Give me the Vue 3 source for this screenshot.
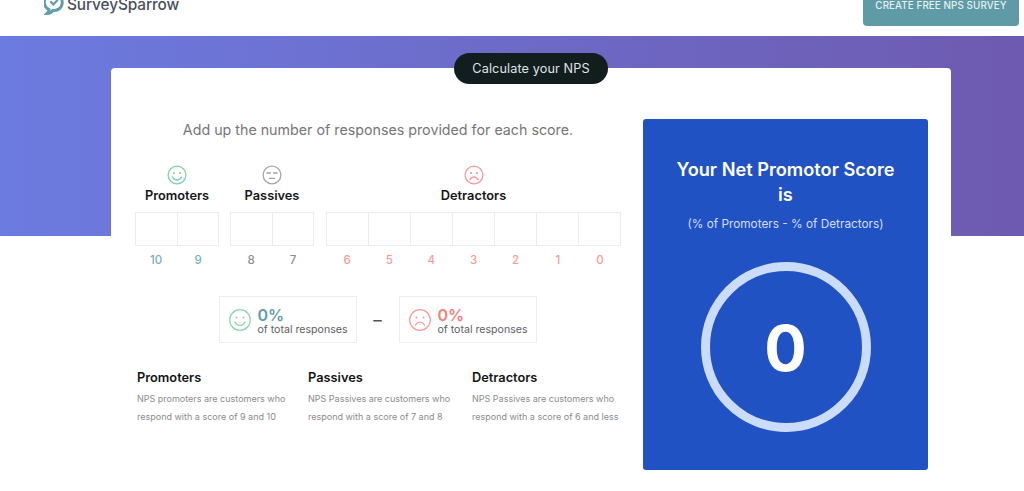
<script setup>
const promoters = [10, 9]
const passives = [8, 7]
const detractors = [6, 5, 4, 3, 2, 1, 0]
const info = [
  { title: 'Promoters', lines: ['NPS promoters are customers who', 'respond with a score of 9 and 10'], width: '171px' },
  { title: 'Passives', lines: ['NPS Passives are customers who', 'respond with a score of 7 and 8'], width: '164px' },
  { title: 'Detractors', lines: ['NPS Passives are customers who', 'respond with a score of 6 and less'], width: '150px' }
]
</script>

<template>
  <div class="page">
    <header class="top">
      <div class="logo">
        <svg class="logo-mark" viewBox="0 0 20 24" width="20" height="24">
          <path d="M10 1.5a8 8 0 1 1-1 15.900c-1.200 1.900-3.200 3-6 3.100 1.200-1.100 1.900-2.300 2-3.900A8 8 0 0 1 10 1.500z" fill="none" stroke="#5f9ea8" stroke-width="3"/>
          <path d="M6.400 8.400l3 3 4.400-4.600" fill="none" stroke="#5f9ea8" stroke-width="2.200"/>
        </svg>
        <span class="logo-text">SurveySparrow</span>
      </div>
      <div class="cta">CREATE FREE NPS SURVEY</div>
    </header>

    <section class="hero">
      <div class="card">
        <div class="pill">Calculate your NPS</div>
        <div class="left">
          <p class="lead">Add up the number of responses provided for each score.</p>

          <div class="scores">
            <div class="group">
              <svg class="face" viewBox="0 0 20 20" width="20" height="20">
                <circle cx="10" cy="10" r="8.900" fill="none" stroke="#7fd0ab" stroke-width="1.300"/>
                <circle cx="7" cy="8" r="1.100" fill="#7fd0ab"/><circle cx="13" cy="8" r="1.100" fill="#7fd0ab"/>
                <path d="M5.600 12c1 2.200 2.600 3 4.400 3s3.400-.8 4.400-3" fill="none" stroke="#7fd0ab" stroke-width="1.300" stroke-linecap="round"/>
              </svg>
              <div class="label">Promoters</div>
              <div class="boxes"><div v-for="n in promoters" :key="n" class="box"></div></div>
              <div class="nums teal"><span v-for="n in promoters" :key="n">{{ n }}</span></div>
            </div>
            <div class="group">
              <svg class="face" viewBox="0 0 20 20" width="20" height="20">
                <circle cx="10" cy="10" r="8.900" fill="none" stroke="#a5a5a5" stroke-width="1.300"/>
                <path d="M4.800 8h3.600M11.600 8h3.600M7.400 13.400h5.200" fill="none" stroke="#a5a5a5" stroke-width="1.400" stroke-linecap="round"/>
              </svg>
              <div class="label">Passives</div>
              <div class="boxes"><div v-for="n in passives" :key="n" class="box"></div></div>
              <div class="nums gray"><span v-for="n in passives" :key="n">{{ n }}</span></div>
            </div>
            <div class="group">
              <svg class="face" viewBox="0 0 20 20" width="20" height="20">
                <circle cx="10" cy="10" r="8.900" fill="none" stroke="#f79b98" stroke-width="1.300"/>
                <circle cx="7" cy="8" r="1.100" fill="#f79b98"/><circle cx="13" cy="8" r="1.100" fill="#f79b98"/>
                <path d="M6 14.600c.9-1.800 2.300-2.600 4-2.600s3.100.8 4 2.600" fill="none" stroke="#f79b98" stroke-width="1.300" stroke-linecap="round"/>
              </svg>
              <div class="label">Detractors</div>
              <div class="boxes"><div v-for="n in detractors" :key="n" class="box"></div></div>
              <div class="nums red"><span v-for="n in detractors" :key="n">{{ n }}</span></div>
            </div>
          </div>

          <div class="summary">
            <div class="stat">
              <svg viewBox="0 0 22 22" width="22" height="22">
                <circle cx="11" cy="11" r="10.300" fill="none" stroke="#86d3b1" stroke-width="1.200"/>
                <circle cx="7.500" cy="8.500" r=".9" fill="#86d3b1"/><circle cx="14.500" cy="8.500" r=".9" fill="#86d3b1"/>
                <path d="M6 13c1 2.400 3 3.400 5 3.400s4-1 5-3.400" fill="none" stroke="#86d3b1" stroke-width="1.200" stroke-linecap="round"/>
              </svg>
              <div class="stat-text">
                <div class="pct teal-strong">0%</div>
                <div class="of">of total responses</div>
              </div>
            </div>
            <span class="minus">–</span>
            <div class="stat">
              <svg viewBox="0 0 22 22" width="22" height="22">
                <circle cx="11" cy="11" r="10.300" fill="none" stroke="#f79b98" stroke-width="1.200"/>
                <circle cx="7.500" cy="8.500" r=".9" fill="#f79b98"/><circle cx="14.500" cy="8.500" r=".9" fill="#f79b98"/>
                <path d="M6.500 16.200c1-2.200 2.600-3.200 4.500-3.200s3.500 1 4.500 3.200" fill="none" stroke="#f79b98" stroke-width="1.200" stroke-linecap="round"/>
              </svg>
              <div class="stat-text">
                <div class="pct red-strong">0%</div>
                <div class="of">of total responses</div>
              </div>
            </div>
          </div>

          <div class="info">
            <div v-for="item in info" :key="item.title" class="info-col" :style="{ width: item.width }">
              <h3>{{ item.title }}</h3>
              <p v-for="line in item.lines" :key="line">{{ line }}</p>
            </div>
          </div>
        </div>

        <aside class="panel">
          <h2>Your Net Promotor Score<br>is</h2>
          <p class="formula">(% of Promoters - % of Detractors)</p>
          <div class="ring">0</div>
        </aside>
      </div>
    </section>
  </div>
</template>

<style>
html, body { margin: 0; background: #fff; overflow: hidden; }
</style>

<style scoped>
.page {
  width: 1024px;
  height: 491px;
  overflow: hidden;
  font-family: Inter, "Liberation Sans", sans-serif;
  background: #fff;
}
.top {
  height: 36px;
  display: flex;
  justify-content: space-between;
  align-items: flex-start;
  padding: 0 5px 0 44px;
  overflow: hidden;
  box-sizing: border-box;
}
.logo {
  display: flex;
  align-items: center;
  gap: 3px;
  margin-top: -7px;
}
.logo-mark { display: block; margin-top: -1px; }
.logo-text {
  font-size: 15.400px;
  font-weight: 500;
  color: #4a4f60;
  line-height: 24px;
  letter-spacing: -0.1px;
}
.cta {
  width: 156px;
  height: 40px;
  margin-top: -14px;
  background: #5f9ba6;
  border-radius: 4px;
  color: #e6f0f1;
  font-size: 9.800px;
  font-weight: 500;
  line-height: 40px;
  text-align: center;
  letter-spacing: 0.1px;
}
.hero {
  height: 455px;
  padding: 32px 73px 0 111px;
  box-sizing: border-box;
  background: linear-gradient(90deg, #6c7be0 0%, #6e5ab0 100%) no-repeat;
  background-size: 100% 200px;
}
.card {
  position: relative;
  width: 840px;
  height: 440px;
  box-sizing: border-box;
  background: #fff;
  border-radius: 4px;
  padding: 51px 23px 0 24px;
  display: flex;
  justify-content: space-between;
  align-items: flex-start;
}
.pill {
  position: absolute;
  left: 343px;
  top: -15px;
  width: 154px;
  height: 31px;
  border-radius: 16px;
  background: #121d1e;
  color: #dfe3e3;
  font-size: 12.700px;
  line-height: 31px;
  text-align: center;
  letter-spacing: 0.1px;
}
.left { width: 486px; }
.lead {
  margin: 0 0 24px;
  height: 22px;
  line-height: 22px;
  text-align: center;
  font-size: 14.250px;
  color: #767676;
  white-space: nowrap;
}
.scores {
  display: flex;
  gap: 11px;
}
.group {
  display: flex;
  flex-direction: column;
  align-items: center;
}
.group:last-child { margin-left: 1px; }
.face { display: block; margin-bottom: 2px; }
.label {
  font-size: 12.800px;
  font-weight: 600;
  line-height: 18px;
  color: #161616;
  margin-bottom: 7px;
}
.boxes {
  display: flex;
  border: 1px solid #ececec;
}
.box {
  width: 41px;
  height: 32px;
  border-right: 1px solid #ececec;
}
.box:last-child { width: 40px; border-right: 0; }
.group:last-child .box:last-child { width: 41px; }
.nums {
  display: flex;
  width: 100%;
  margin-top: 7px;
  font-size: 11.500px;
  font-weight: 500;
  line-height: 14px;
}
.nums span { flex: 1; text-align: center; }
.teal { color: #79aebb; }
.gray { color: #8f8f8f; }
.red { color: #f79b98; }
.summary {
  display: flex;
  align-items: center;
  justify-content: center;
  margin-top: 29px;
  margin-left: -1px;
}
.stat {
  width: 138px;
  height: 47px;
  box-sizing: border-box;
  border: 1px solid #eeeeee;
  display: flex;
  align-items: center;
  gap: 7px;
  padding-left: 9px;
}
.stat svg { flex: none; }
.stat-text { padding-top: 4px; }
.pct {
  font-size: 16px;
  font-weight: 600;
  line-height: 19px;
  margin-bottom: -2px;
}
.of {
  font-size: 10.600px;
  line-height: 14px;
  color: #5e6166;
  white-space: nowrap;
}
.teal-strong { color: #5f9ba9; }
.red-strong { color: #f47f7c; }
.minus {
  width: 42px;
  text-align: center;
  font-size: 17px;
  color: #555;
}
.info {
  display: flex;
  margin-top: 26px;
  padding-left: 2px;
}
.info-col { flex: none; }
.info-col h3 {
  margin: 0 0 3px;
  font-size: 12.800px;
  font-weight: 600;
  line-height: 18px;
  color: #151515;
}
.info-col p {
  margin: 0;
  font-size: 9px;
  line-height: 18px;
  color: #8b8b8b;
  white-space: nowrap;
}
.panel {
  width: 285px;
  height: 351px;
  box-sizing: border-box;
  background: #2152c4;
  border-radius: 3px;
  padding-top: 38px;
  color: #fff;
  text-align: center;
}
.panel h2 {
  margin: 0;
  font-size: 18.200px;
  font-weight: 600;
  line-height: 24.500px;
}
.formula {
  margin: 10px 0 0;
  font-size: 11.800px;
  line-height: 16px;
  color: #d3def5;
}
.ring {
  width: 170px;
  height: 170px;
  box-sizing: border-box;
  margin: 30px auto 0;
  padding-top: 3px;
  border: 9px solid #cbdcfb;
  border-radius: 50%;
  display: flex;
  align-items: center;
  justify-content: center;
  font-size: 63px;
  font-weight: 700;
  line-height: 1;
}
</style>
